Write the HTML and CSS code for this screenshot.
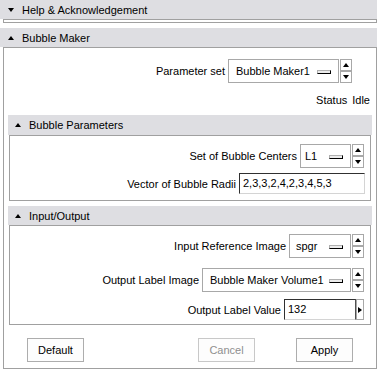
FILE: index.html
```html
<!DOCTYPE html>
<html lang="en">
<head>
    <meta charset="UTF-8">
    <title>Bubble Maker</title>
    <link rel="stylesheet" href="styles.css">
</head>
<body>
    <div class="panel">
        <div class="panel-head"><span class="tri tri-down"></span>Help &amp; Acknowledgement</div>
        <div class="panel-body collapsed"></div>
    </div>

    <div class="panel main-panel">
        <div class="panel-head"><span class="tri tri-up"></span>Bubble Maker</div>
        <div class="panel-body main-body">
            <div class="field-row param-row">
                <span class="label">Parameter set</span>
                <div class="option opt-param">Bubble Maker1<span class="indicator"></span></div>
                <div class="spinner"><span class="spin-btn spin-up"></span><span class="spin-btn spin-down"></span></div>
            </div>

            <div class="status-row">
                <span>Status</span>
                <span>Idle</span>
            </div>

            <div class="panel sub-panel">
                <div class="panel-head"><span class="tri tri-up"></span>Bubble Parameters</div>
                <div class="panel-body sub-body params-body">
                    <div class="field-row">
                        <span class="label">Set of Bubble Centers</span>
                        <div class="option opt-centers">L1<span class="indicator"></span></div>
                        <div class="spinner"><span class="spin-btn spin-up"></span><span class="spin-btn spin-down"></span></div>
                    </div>
                    <div class="field-row radii-row">
                        <span class="label">Vector of Bubble Radii</span>
                        <div class="entry entry-radii">2,3,3,2,4,2,3,4,5,3</div>
                    </div>
                </div>
            </div>

            <div class="panel sub-panel io-panel">
                <div class="panel-head"><span class="tri tri-up"></span>Input/Output</div>
                <div class="panel-body sub-body io-body">
                    <div class="field-row">
                        <span class="label">Input Reference Image</span>
                        <div class="option opt-ref">spgr<span class="indicator"></span></div>
                        <div class="spinner"><span class="spin-btn spin-up"></span><span class="spin-btn spin-down"></span></div>
                    </div>
                    <div class="field-row out-image-row">
                        <span class="label">Output Label Image</span>
                        <div class="option opt-out">Bubble Maker Volume1<span class="indicator"></span></div>
                        <div class="spinner"><span class="spin-btn spin-up"></span><span class="spin-btn spin-down"></span></div>
                    </div>
                    <div class="field-row out-value-row">
                        <span class="label">Output Label Value</span>
                        <div class="entry entry-value">132</div>
                        <span class="arrow-btn"></span>
                    </div>
                </div>
            </div>

            <div class="button-row">
                <button class="btn">Default</button>
                <button class="btn btn-cancel" disabled>Cancel</button>
                <button class="btn btn-apply">Apply</button>
            </div>
        </div>
    </div>
</body>
</html>
```

FILE: styles.css
```css
* {
    margin: 0;
    padding: 0;
    box-sizing: border-box;
}

body {
    font-family: 'Liberation Sans', Arial, sans-serif;
    font-size: 11px;
    color: #000;
    background: #fff;
    width: 379px;
}

.panel {
    margin-right: 2px;
}

.main-panel {
    margin-top: 5px;
}

.panel-head {
    height: 19px;
    background: #dedee2;
    display: flex;
    align-items: center;
    padding-left: 8px;
}

.tri {
    width: 0;
    height: 0;
    border-left: 3.5px solid transparent;
    border-right: 3.5px solid transparent;
    margin-right: 8px;
}

.tri-down {
    border-top: 4px solid #000;
}

.tri-up {
    border-bottom: 4px solid #000;
}

.panel-body {
    margin-left: 3px;
    border: 1px solid #a0a0a0;
    background: #fff;
}

.collapsed {
    height: 4px;
}

.main-body {
    padding: 11px 0 6px;
}

/* field rows: label, widget, spinner, all pushed right */
.field-row {
    display: flex;
    justify-content: flex-end;
    align-items: center;
}

.param-row {
    padding-right: 24px;
}

.label {
    margin-right: 3px;
    white-space: nowrap;
}

.option {
    height: 24px;
    border: 1px solid #a8a8a8;
    background: #fff;
    display: flex;
    align-items: center;
    justify-content: space-between;
    padding: 0 7px;
    white-space: nowrap;
}

.indicator {
    width: 14px;
    height: 4px;
    border: 1px solid #b0b0b0;
    border-right-color: #000;
    border-bottom-color: #000;
    background: #ececec;
    margin-top: 1px;
}

.opt-param { width: 111px; }
.opt-centers { width: 51px; padding-left: 4px; }
.opt-ref { width: 62px; padding-left: 6px; }
.opt-out { width: 149px; }

.spinner {
    display: flex;
    flex-direction: column;
    width: 12px;
    height: 24px;
    margin-left: 1px;
}

.spin-btn {
    flex: 1;
    border: 1px solid #a8a8a8;
    background: #fff;
    display: flex;
    align-items: center;
    justify-content: center;
}

.spin-btn::before {
    content: "";
    border-left: 3.5px solid transparent;
    border-right: 3.5px solid transparent;
}

.spin-up::before {
    border-bottom: 4px solid #000;
}

.spin-down::before {
    border-top: 4px solid #000;
}

.status-row {
    display: flex;
    justify-content: flex-end;
    gap: 5px;
    height: 13px;
    line-height: 13px;
    margin-top: 11px;
    padding-right: 6px;
}

.sub-panel {
    margin: 8px 4px 0 4px;
}

.sub-panel .panel-head {
    height: 20px;
    padding-left: 7px;
}

.io-panel {
    margin-top: 5px;
}

.io-panel .panel-head {
    height: 19px;
}

.sub-body {
    margin: 0 1px;
    padding-right: 6px;
}

.params-body {
    padding-top: 8px;
    padding-bottom: 6px;
}

.radii-row {
    margin-top: 5px;
}

.entry {
    height: 21px;
    line-height: 19px;
    border: 1px solid #d4d4d4;
    border-top-color: #303030;
    border-left-color: #303030;
    background: #fff;
    padding-left: 3px;
    white-space: nowrap;
}

.entry-radii {
    width: 126px;
    margin-right: -1px;
}

.io-body {
    padding-top: 8px;
    padding-bottom: 4px;
}

.out-image-row {
    margin-top: 10px;
}

.out-value-row {
    margin-top: 7px;
}

.entry-value {
    width: 72px;
    border-right-color: #505050;
}

.arrow-btn {
    width: 8px;
    height: 21px;
    border: 1px solid #a8a8a8;
    background: #fff;
    display: flex;
    align-items: center;
    justify-content: center;
}

.arrow-btn::before {
    content: "";
    border-top: 3.5px solid transparent;
    border-bottom: 3.5px solid transparent;
    border-left: 4px solid #000;
}

.button-row {
    display: flex;
    align-items: center;
    margin-top: 13px;
    padding: 0 23px;
}

.btn {
    width: 57px;
    height: 24px;
    border: 1px solid #adadad;
    background: #fdfdfd;
    font-family: inherit;
    font-size: 11px;
    color: #000;
}

.btn-cancel {
    margin-left: auto;
    color: #8f8f8f;
    border-color: #c8c8c8;
}

.btn-apply {
    margin-left: 41px;
}
```
